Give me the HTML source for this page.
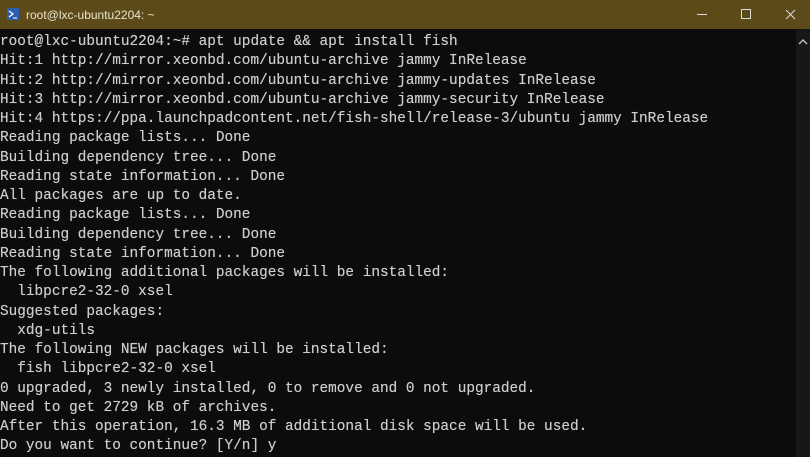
<!DOCTYPE html>
<html><head><meta charset="utf-8"><style>
html,body{margin:0;padding:0;width:810px;height:457px;overflow:hidden;background:#0c0c0c}
.title{position:absolute;left:0;top:0;width:810px;height:29px;background:#5d4a19;color:#e8e2d0;font:12px "Liberation Sans",sans-serif}
.title .t{position:absolute;left:26px;top:8px}
.icon{position:absolute;left:7px;top:8px;width:12px;height:12px;background:#2a5fb0}
.sb{position:absolute;left:796px;top:29px;width:14px;height:428px;background:#171717}
pre{position:absolute;left:0;top:33px;margin:0;font:14.4px/19.25px "Liberation Mono",monospace;color:#cccccc;font-weight:normal;text-shadow:0 0 0.4px #ccc}
</style></head><body>
<div class="title"><div class="icon"><svg width="12" height="12"><path d="M2 3 L6 6 L2 9" stroke="#fff" stroke-width="1.3" fill="none"/><path d="M6 10 H10" stroke="#fff" stroke-width="1"/></svg></div><span class="t">root@lxc-ubuntu2204: ~</span>
<svg style="position:absolute;left:680px;top:0" width="130" height="29"><path d="M17 14.5 H27" stroke="#ddd" stroke-width="1"/><rect x="61.5" y="9.5" width="9" height="9" stroke="#ddd" fill="none"/><path d="M106 10 L115 19 M115 10 L106 19" stroke="#ddd" stroke-width="1"/></svg></div>
<div class="sb"><svg width="14" height="14" style="position:absolute;top:6px;left:0"><path d="M3 9 L7 5 L11 9" stroke="#bbb" stroke-width="1.5" fill="none"/></svg></div>
<pre>root@lxc-ubuntu2204:~# apt update &amp;&amp; apt install fish
Hit:1 http://mirror.xeonbd.com/ubuntu-archive jammy InRelease
Hit:2 http://mirror.xeonbd.com/ubuntu-archive jammy-updates InRelease
Hit:3 http://mirror.xeonbd.com/ubuntu-archive jammy-security InRelease
Hit:4 https://ppa.launchpadcontent.net/fish-shell/release-3/ubuntu jammy InRelease
Reading package lists... Done
Building dependency tree... Done
Reading state information... Done
All packages are up to date.
Reading package lists... Done
Building dependency tree... Done
Reading state information... Done
The following additional packages will be installed:
  libpcre2-32-0 xsel
Suggested packages:
  xdg-utils
The following NEW packages will be installed:
  fish libpcre2-32-0 xsel
0 upgraded, 3 newly installed, 0 to remove and 0 not upgraded.
Need to get 2729 kB of archives.
After this operation, 16.3 MB of additional disk space will be used.
Do you want to continue? [Y/n] y</pre>
</body></html>
